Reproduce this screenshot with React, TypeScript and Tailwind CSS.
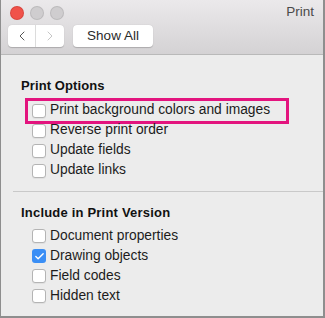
import { Check, ChevronLeft, ChevronRight } from "lucide-react";

const font = { fontFamily: '"Helvetica Neue", "Liberation Sans", Arial, sans-serif' };

function Box({ checked }: { checked?: boolean }) {
  if (checked) {
    return (
      <span className="flex h-[14px] w-[14px] shrink-0 items-center justify-center rounded-[3px] bg-[#3a8ef5]">
        <Check className="h-[11px] w-[11px] text-white" strokeWidth={3} />
      </span>
    );
  }
  return (
    <span className="h-[14px] w-[14px] shrink-0 rounded-[3px] border border-[#b4b4b4] bg-white shadow-[0_1px_0_rgba(0,0,0,0.05)]" />
  );
}

function Row({ label, checked }: { label: string; checked?: boolean }) {
  return (
    <div className="flex h-[20px] items-center gap-[4px]">
      <Box checked={checked} />
      <span className="text-[13.8px] text-[#1c1c1c]">{label}</span>
    </div>
  );
}

export default function App() {
  return (
    <div style={font} className="h-[318px] w-[325px] overflow-hidden bg-white">
      <div className="flex h-[318px] w-[325px] flex-col border-b-2 border-l border-r-2 border-[#8e8e8e] bg-[#ececec]">
        {/* title bar */}
        <div className="h-[55px] shrink-0 border-b border-[#b9b9b9] bg-gradient-to-b from-[#ebe9eb] to-[#d4d2d4] px-[7px]">
          <div className="flex h-[25px] items-center">
            <div className="flex gap-[8px] pl-[3px]">
              <span className="h-[12px] w-[12px] rounded-full bg-[#f0524a] ring-1 ring-[#d9443d]" />
              <span className="h-[12px] w-[12px] rounded-full bg-[#cfcdcf] ring-1 ring-[#bcbabc]" />
              <span className="h-[12px] w-[12px] rounded-full bg-[#cfcdcf] ring-1 ring-[#bcbabc]" />
            </div>
            <span className="ml-auto pr-[2px] text-[13.5px] text-[#4a4a4a]">Print</span>
          </div>
          <div className="flex items-center gap-[9px]">
            <div className="flex h-[22px] w-[56px] overflow-hidden rounded-[4px] bg-white shadow-[0_0.5px_1px_rgba(0,0,0,0.2)]">
              <span className="flex w-[28px] items-center justify-center border-r border-[#dcdcdc]">
                <ChevronLeft className="h-[16px] w-[16px] text-[#555]" strokeWidth={1.5} />
              </span>
              <span className="flex w-[28px] items-center justify-center">
                <ChevronRight className="h-[16px] w-[16px] text-[#c6c6c6]" strokeWidth={1.5} />
              </span>
            </div>
            <div className="flex h-[22px] w-[80px] items-center justify-center rounded-[4px] bg-white text-[13.5px] text-[#2a2a2a] shadow-[0_0.5px_1px_rgba(0,0,0,0.2)]">
              Show All
            </div>
          </div>
        </div>

        {/* print options */}
        <div className="pl-[20px] pt-[21px]">
          <div className="text-[13px] font-bold tracking-[0.1px] text-[#111]">Print Options</div>
          <div className="mt-[3px] flex flex-col pl-[11px]">
            <div className="-ml-[7px] -mt-[1px] mb-[-3px] w-[264px] border-[3px] border-[#e3147e] pl-[4px]">
              <Row label="Print background colors and images" />
            </div>
            <Row label="Reverse print order" />
            <Row label="Update fields" />
            <Row label="Update links" />
          </div>
        </div>

        <div className="ml-[12px] mt-[10px] h-px bg-[#c9c9c9]" />

        {/* include */}
        <div className="pl-[20px] pt-[11px]">
          <div className="text-[13px] font-bold tracking-[0.2px] text-[#111]">Include in Print Version</div>
          <div className="mt-[4px] flex flex-col pl-[11px]">
            <Row label="Document properties" />
            <Row label="Drawing objects" checked />
            <Row label="Field codes" />
            <Row label="Hidden text" />
          </div>
        </div>
      </div>
    </div>
  );
}
